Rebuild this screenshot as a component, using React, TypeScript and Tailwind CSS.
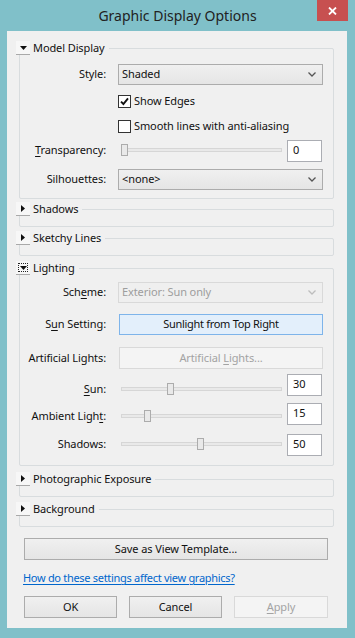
import React from 'react';

const Mn: React.FC<{ children: React.ReactNode }> = ({ children }) => (
    <span className="underline underline-offset-2">{children}</span>
);

const Toggle: React.FC<{ open?: boolean; focus?: boolean }> = ({ open, focus }) => (
    <div className="flex h-[14px] w-[14px] items-center justify-center border-b border-[#a9a9a9] bg-[#f7f7f7]">
        <div
            className={`flex h-[9px] w-[10px] items-center justify-center ${focus ? 'border border-dotted border-[#222]' : ''}`}
        >
            {open ? (
                <svg width="7" height="4" viewBox="0 0 7 4">
                    <path d="M0 0h7L3.5 4z" fill="#111" />
                </svg>
            ) : (
                <svg width="4" height="7" viewBox="0 0 4 7">
                    <path d="M0 0l4 3.5L0 7z" fill="#111" />
                </svg>
            )}
        </div>
    </div>
);

const Group: React.FC<{
    title: string;
    open?: boolean;
    focus?: boolean;
    className?: string;
    boxClassName?: string;
    children?: React.ReactNode;
}> = ({ title, open, focus, className = '', boxClassName = '', children }) => (
    <div className={`ml-[12px] mr-[13px] ${className}`}>
        <div className="relative z-10 -ml-[3px] flex h-[14px] w-fit items-center gap-[3px] bg-[#f0f0f0] pr-[4px]">
            <Toggle open={open} focus={focus} />
            <span>{title}</span>
        </div>
        <div className={`-mt-[7px] rounded-[2px] border border-[#d8dcde] ${boxClassName}`}>{children}</div>
    </div>
);

const Row: React.FC<{ label: React.ReactNode; className?: string; children: React.ReactNode }> = ({
    label,
    className = '',
    children,
}) => (
    <div className={`flex items-center ${className}`}>
        <div className="w-[86px] text-right">{label}</div>
        <div className="ml-[12px] w-[205px]">{children}</div>
    </div>
);

const Chevron: React.FC<{ color?: string }> = ({ color = '#555' }) => (
    <svg width="8" height="5" viewBox="0 0 8 5">
        <path d="M0.5 0.5L4 4L7.5 0.5" fill="none" stroke={color} strokeWidth="1.3" />
    </svg>
);

const Select: React.FC<{ value: string; disabled?: boolean }> = ({ value, disabled }) => (
    <div
        className={`flex h-[21px] items-center justify-between border pl-[3px] pr-[6px] ${
            disabled
                ? 'border-[#d9d9d9] bg-[#efefef] text-[#9d9d9d]'
                : 'border-[#acacac] bg-[linear-gradient(#f0f0f0,#e5e5e5)] text-[#111]'
        }`}
    >
        <span>{value}</span>
        <Chevron color={disabled ? '#bdbdbd' : '#555'} />
    </div>
);

const Checkbox: React.FC<{ checked?: boolean; label: string; className?: string }> = ({
    checked,
    label,
    className = '',
}) => (
    <div className={`flex h-[13px] items-center gap-[3px] pl-[98px] ${className}`}>
        <div className="flex h-[13px] w-[13px] items-center justify-center border border-[#333] bg-white">
            {checked && (
                <svg width="9" height="9" viewBox="0 0 9 9">
                    <path d="M1 4.6L3.4 7L8 1.4" fill="none" stroke="#111" strokeWidth="1.9" />
                </svg>
            )}
        </div>
        <span>{label}</span>
    </div>
);

const Slider: React.FC<{ value: number }> = ({ value }) => (
    <div className="relative h-[12px] w-[166px]">
        <div className="absolute left-[3px] top-[4px] h-[4px] w-[161px] border border-[#d6d6d6] bg-[#e9e9e9]" />
        <div
            className="absolute top-0 h-[12px] w-[7px] border border-[#acacac] bg-[#e9e9e9]"
            style={{ left: 3 + value * 1.52 }}
        />
    </div>
);

const NumBox: React.FC<{ value: string }> = ({ value }) => (
    <div className="ml-[3px] flex h-[22px] w-[35px] items-center border border-[#abadb3] bg-white pl-[5px] pb-[2px] text-[#111]">
        {value}
    </div>
);

const SliderRow: React.FC<{ label: React.ReactNode; value: number; shift: string; className?: string }> = ({
    label,
    value,
    shift,
    className = '',
}) => (
    <div className={`flex h-[22px] items-center ${className}`}>
        <div className={`flex items-center ${shift}`}>
            <div className="w-[86px] text-right">{label}</div>
            <div className="ml-[12px]">
                <Slider value={value} />
            </div>
        </div>
        <NumBox value={String(value)} />
    </div>
);

const Button: React.FC<{ className?: string; disabled?: boolean; children: React.ReactNode }> = ({
    className = '',
    disabled,
    children,
}) => (
    <div
        className={`flex h-[22px] items-center justify-center border ${
            disabled
                ? 'border-[#d9d9d9] bg-[#f4f4f4] text-[#a3a3a3]'
                : 'border-[#acacac] bg-[linear-gradient(#f0f0f0,#e5e5e5)] text-[#111]'
        } ${className}`}
    >
        {children}
    </div>
);

export default function App() {
    return (
        <div className="flex h-[638px] w-[355px] flex-col bg-[#80c0c9] font-['Noto_Sans',sans-serif] text-[11px] tracking-[-0.1px] text-[#111]">
            <div className="relative flex h-[31px] shrink-0 items-center justify-center">
                <span className="text-[14px] tracking-normal text-[#222]">Graphic Display Options</span>
                <div className="absolute right-[7px] top-0 flex h-[21px] w-[31px] items-center justify-center bg-[#c75050]">
                    <svg width="9" height="8" viewBox="0 0 9 8">
                        <path d="M1 0.5L8 7.5M8 0.5L1 7.5" stroke="#fff" strokeWidth="1.8" />
                    </svg>
                </div>
            </div>

            <div className="mb-[10px] ml-[7px] mr-[8px] flex flex-1 flex-col bg-[#f0f0f0]">
                <Group title="Model Display" open className="mt-[10px]" boxClassName="pt-[15px] pb-[8px]">
                    <Row label="Style:">
                        <Select value="Shaded" />
                    </Row>
                    <Checkbox checked label="Show Edges" className="mt-[10px]" />
                    <Checkbox label="Smooth lines with anti-aliasing" className="mt-[12px]" />
                    <SliderRow
                        label={
                            <>
                                <Mn>T</Mn>ransparency:
                            </>
                        }
                        value={0}
                        shift="-translate-y-[1px]"
                        className="mt-[7px]"
                    />
                    <Row label="Silhouettes:" className="mt-[7px]">
                        <Select value="<none>" />
                    </Row>
                </Group>

                <Group title="Shadows" className="mt-[3px]" boxClassName="h-[18px]" />
                <Group title="Sketchy Lines" className="mt-[4px]" boxClassName="h-[18px]" />

                <Group title="Lighting" open focus className="mt-[5px]" boxClassName="pt-[13px] pb-[9px]">
                    <Row
                        label={
                            <>
                                Sch<Mn>e</Mn>me:
                            </>
                        }
                    >
                        <Select value="Exterior: Sun only" disabled />
                    </Row>
                    <Row
                        label={
                            <>
                                S<Mn>u</Mn>n Setting:
                            </>
                        }
                        className="mt-[11px]"
                    >
                        <div className="ml-[1px] flex h-[21px] items-center justify-center border border-[#7eb4ea] bg-[#e3effb] tracking-[-0.3px]">
                            Sunlight from Top Right
                        </div>
                    </Row>
                    <Row label="Artificial Lights:" className="mt-[12px]">
                        <Button disabled className="ml-[1px] h-[21px]">
                            <span>
                                Artificial <Mn>L</Mn>ights...
                            </span>
                        </Button>
                    </Row>
                    <SliderRow
                        label={
                            <>
                                <Mn>S</Mn>un:
                            </>
                        }
                        value={30}
                        shift="translate-y-[4px]"
                        className="mt-[5px]"
                    />
                    <SliderRow
                        label={
                            <>
                                Ambient Ligh<Mn>t</Mn>:
                            </>
                        }
                        value={15}
                        shift="translate-y-[2px]"
                        className="mt-[7px]"
                    />
                    <SliderRow label="Shadows:" value={50} shift="-translate-y-[1px]" className="mt-[9px]" />
                </Group>

                <Group title="Photographic Exposure" className="mt-[6px]" boxClassName="h-[18px]" />
                <Group title="Background" className="mt-[5px]" boxClassName="h-[18px]" />

                <Button className="ml-[17px] mr-[19px] mt-[11px]">Save as View Template...</Button>

                <div className="ml-[16px] mt-[10px] h-[16px] leading-[16px]">
                    <span className="text-[#0066cc] underline underline-offset-2 tracking-[-0.3px]">
                        How do these settings affect view graphics?
                    </span>
                </div>

                <div className="ml-[17px] mt-[10px] flex gap-[12px]">
                    <Button className="w-[93px]">OK</Button>
                    <Button className="w-[93px]">Cancel</Button>
                    <Button disabled className="w-[94px]">
                        <span>
                            <Mn>A</Mn>pply
                        </span>
                    </Button>
                </div>
            </div>
        </div>
    );
}
